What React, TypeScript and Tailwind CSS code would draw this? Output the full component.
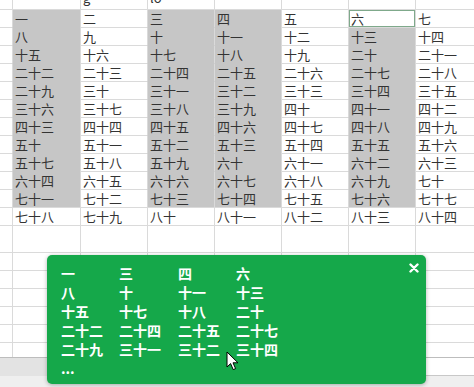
import React from "react";

const digits = ["", "一", "二", "三", "四", "五", "六", "七", "八", "九"];
function cnNum(n: number): string {
  if (n < 10) return digits[n];
  const t = Math.floor(n / 10);
  const u = n % 10;
  return (t === 1 ? "" : digits[t]) + "十" + digits[u];
}

const greyCols = [true, false, true, true, false, true, false];
const colWidths = ["w-[68px]", "w-[67px]", "w-[67px]", "w-[67px]", "w-[67px]", "w-[67px]", "w-[67px]"];

type RowSpec = { h: string; data?: number };

const rows: RowSpec[] = [];
for (let r = 0; r < 12; r++) rows.push({ h: "h-[18px]", data: r });
rows.push({ h: "h-[27px]" });
for (let r = 0; r < 5; r++) rows.push({ h: "h-[18px]" });
rows.push({ h: "h-[15px]" });

function Cell({
  idx,
  text,
  grey,
  greyAbove,
  active,
}: {
  idx: number;
  text?: string;
  grey: boolean;
  greyAbove: boolean;
  active?: boolean;
}) {
  const bg = grey ? "bg-[#c6c6c6]" : "bg-white";
  const bt = grey && greyAbove ? "border-t-[#c6c6c6]" : "border-t-[#dadada]";
  return (
    <div
      className={`${colWidths[idx]} shrink-0 border-l border-l-[#dadada] border-t ${bt} ${bg} ${
        active ? "shadow-[inset_0_0_0_1px_#7fa98b]" : ""
      } pl-[2px] text-[13px] leading-[18px] text-[#333333] whitespace-nowrap overflow-hidden`}
    >
      {text}
    </div>
  );
}

export default function App() {
  return (
    <div
      className="relative w-[474px] h-[387px] overflow-hidden bg-white"
      style={{ fontFamily: '"Noto Sans CJK SC", "Noto Sans", sans-serif' }}
    >
      {/* header partial row */}
      <div className="flex h-[9px] overflow-hidden">
        <div className="w-[12px] shrink-0" />
        {colWidths.map((w, i) => (
          <div key={i} className={`${w} shrink-0 border-l border-l-[#dadada] relative overflow-hidden`}>
            <div className="absolute left-[2px] top-[-11px] text-[13px] leading-[18px] text-[#333333]">
              {i === 1 ? "g" : i === 2 ? "lo" : ""}
            </div>
          </div>
        ))}
      </div>
      {rows.map((row, r) => (
        <div key={r} className={`flex ${row.h} overflow-hidden`}>
          <div className="w-[12px] shrink-0 border-t border-t-[#dadada]" />
          {colWidths.map((_, c) => {
            const hasData = row.data !== undefined;
            const n = hasData ? row.data! * 7 + c + 1 : 0;
            const isActive = r === 0 && c === 5;
            const grey = hasData && row.data! < 11 && greyCols[c] && !isActive;
            const greyAbove = hasData && row.data! > 0 && row.data! < 11 && greyCols[c] && !(r === 1 && c === 5);
            return (
              <Cell
                key={c}
                idx={c}
                text={hasData ? cnNum(n) : undefined}
                grey={grey}
                greyAbove={greyAbove}
                active={isActive}
              />
            );
          })}
        </div>
      ))}
      {/* bottom strip */}
      <div className="flex h-[19px] border-t border-t-[#bdbdbd]">
        <div className="w-[300px] bg-[#e3e3e3]" />
        <div className="flex-1 bg-white border-b border-b-[#c8c8c8]" />
      </div>
      <div className="h-[11px] bg-[#efefef]" />

      {/* green popup */}
      <div className="absolute left-[47px] top-[255px] w-[379px] h-[129px] rounded-[5px] bg-[#15a84a] shadow-[0_1px_4px_rgba(0,0,0,0.3)] pl-[14px] pt-[9px] text-white">
        <div className="grid grid-cols-[58px_59px_58px_58px] text-[14px] leading-[19px] font-semibold">
          {Array.from({ length: 5 }).map((_, r) =>
            [0, 2, 3, 5].map((c) => (
              <div key={`${r}-${c}`} className="whitespace-nowrap">
                {cnNum(r * 7 + c + 1)}
              </div>
            ))
          )}
        </div>
        <div className="text-[14px] leading-[19px] font-semibold">...</div>
        <svg className="absolute right-[7px] top-[8px]" width="10" height="10" viewBox="0 0 10 10">
          <path d="M1.5 1.5 L8.5 8.5 M8.5 1.5 L1.5 8.5" stroke="white" strokeWidth="2.4" strokeLinecap="round" />
        </svg>
      </div>

      {/* mouse cursor */}
      <svg className="absolute left-[226px] top-[351px]" width="13" height="20" viewBox="0 0 13 20">
        <path
          d="M1 1 L1 16 L4.6 12.6 L7.2 18.6 L9.6 17.6 L7 11.8 L12 11.8 Z"
          fill="white"
          stroke="black"
          strokeWidth="1"
          strokeLinejoin="round"
        />
      </svg>
    </div>
  );
}
